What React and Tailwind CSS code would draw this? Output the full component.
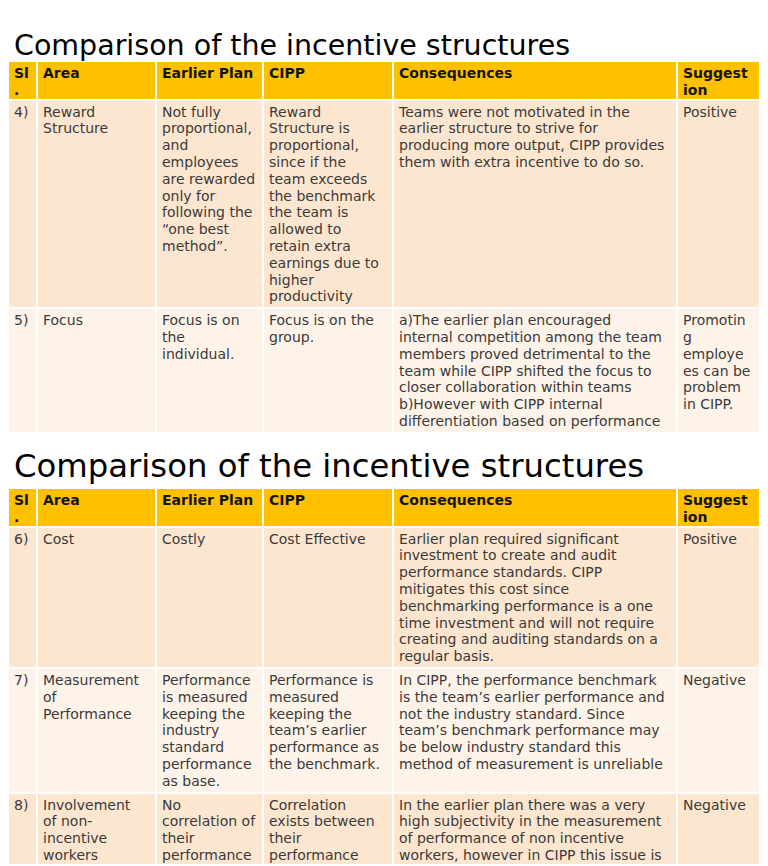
import React from "react";

const COLS = "grid grid-cols-[27px_117px_105px_128px_282px_81px] gap-[2px]";

const HEADER = [["Sl", "."], ["Area"], ["Earlier Plan"], ["CIPP"], ["Consequences"], ["Suggest", "ion"]];

const SLIDE1 = [
  [
    ["4)"],
    ["Reward", "Structure"],
    ["Not fully", "proportional,", "and", "employees", "are rewarded", "only for", "following the", "\u201cone best", "method\u201d."],
    ["Reward", "Structure is", "proportional,", "since if the", "team exceeds", "the benchmark", "the team is", "allowed to", "retain extra", "earnings due to", "higher", "productivity"],
    ["Teams were not motivated in the", "earlier structure to strive for", "producing more output, CIPP provides", "them with extra incentive to do so."],
    ["Positive"],
  ],
  [
    ["5)"],
    ["Focus"],
    ["Focus is on", "the", "individual."],
    ["Focus is on the", "group."],
    ["a)The earlier plan encouraged", "internal competition among the team", "members proved detrimental to the", "team while CIPP shifted the focus to", "closer collaboration within teams", "b)However with CIPP internal", "differentiation based on performance", "among team members may arise"],
    ["Promotin", "g", "employe", "es can be", "problem", "in CIPP."],
  ],
];

const SLIDE2 = [
  [
    ["6)"],
    ["Cost"],
    ["Costly"],
    ["Cost Effective"],
    ["Earlier plan required significant", "investment to create and audit", "performance standards. CIPP", "mitigates this cost since", "benchmarking performance is a one", "time investment and will not require", "creating and auditing standards on a", "regular basis."],
    ["Positive"],
  ],
  [
    ["7)"],
    ["Measurement", "of", "Performance"],
    ["Performance", "is measured", "keeping the", "industry", "standard", "performance", "as base."],
    ["Performance is", "measured", "keeping the", "team\u2019s earlier", "performance as", "the benchmark."],
    ["In CIPP, the performance benchmark", "is the team\u2019s earlier performance and", "not the industry standard. Since", "team\u2019s benchmark performance may", "be below industry standard this", "method of measurement is unreliable"],
    ["Negative"],
  ],
  [
    ["8)"],
    ["Involvement", "of non-", "incentive", "workers"],
    ["No", "correlation of", "their", "performance", "with the", "incentives."],
    ["Correlation", "exists between", "their", "performance", "and the", "incentives."],
    ["In the earlier plan there was a very", "high subjectivity in the measurement", "of performance of non incentive", "workers, however in CIPP this issue is", "resolved as the performance of", "non incentive workers is measured."],
    ["Negative"],
  ],
];

function Lines({ lines }) {
  return lines.map((l, i) => (
    <div key={i} className="whitespace-nowrap">
      {l}
    </div>
  ));
}

function Table({ rows }) {
  return (
    <div className={`${COLS} ml-[9px] w-[750px] text-[14px] leading-[16.8px]`}>
      {HEADER.map((c, i) => (
        <div key={"h" + i} className="bg-[#FFC000] pl-[5px] pt-[3px] pb-[0px] font-bold text-[#141414]">
          <Lines lines={c} />
        </div>
      ))}
      {rows.map((row, r) =>
        row.map((c, i) => (
          <div
            key={r + "-" + i}
            className={`${r % 2 === 0 ? "bg-[#FDE6CF]" : "bg-[#FEF3E8]"} pl-[5px] pt-[3px] pb-[2px] text-[#3a3a3a]`}
          >
            <Lines lines={c} />
          </div>
        ))
      )}
    </div>
  );
}

export default function App() {
  return (
    <div className="w-[768px] bg-white font-['DejaVu_Sans',sans-serif]">
      <div className="h-[432px] overflow-hidden pt-[32px]">
        <div className="pl-[14px] text-[28.5px] leading-[28px] text-black whitespace-nowrap">
          Comparison of the incentive structures
        </div>
        <div className="mt-[2px]">
          <Table rows={SLIDE1} />
        </div>
      </div>
      <div className="h-[432px] overflow-hidden pt-[18px]">
        <div className="pl-[14px] text-[32.3px] leading-[32px] text-black whitespace-nowrap">
          Comparison of the incentive structures
        </div>
        <div className="mt-[7px]">
          <Table rows={SLIDE2} />
        </div>
      </div>
    </div>
  );
}
